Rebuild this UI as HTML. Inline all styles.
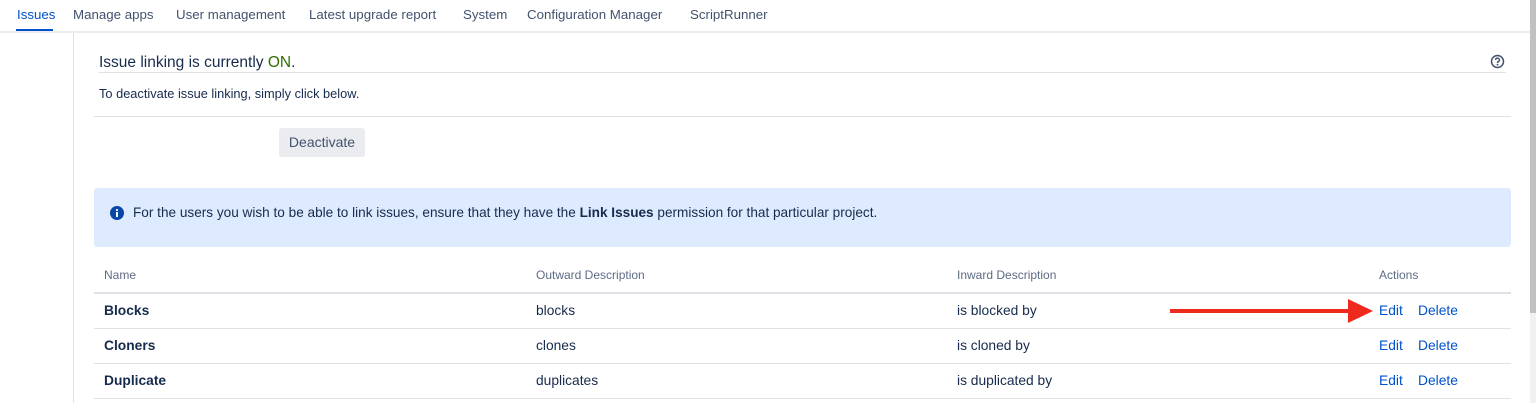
<!DOCTYPE html>
<html><head><meta charset="utf-8"><style>
*{margin:0;padding:0;box-sizing:border-box}
body{width:1536px;height:403px;overflow:hidden;background:#fff;font-family:"Liberation Sans",sans-serif;color:#172b4d;position:relative}
.a{position:absolute;white-space:nowrap}
.nav{font-size:13.3px;top:7px;color:#42526e}
.th{font-size:12px;color:#5e6c84;top:268px}
.td{font-size:13.8px;color:#172b4d}
.b{font-weight:bold}
.lnk{color:#0052cc}
.hl{position:absolute;height:1px;background:#dfe1e6}
</style></head><body>
<div class="a nav" style="left:17px;color:#0052cc">Issues</div>
<div style="position:absolute;left:16px;top:29px;width:37px;height:3px;background:#0052cc"></div>
<div class="a nav" style="left:73px">Manage apps</div>
<div class="a nav" style="left:176px">User management</div>
<div class="a nav" style="left:309px">Latest upgrade report</div>
<div class="a nav" style="left:463px">System</div>
<div class="a nav" style="left:527px">Configuration Manager</div>
<div class="a nav" style="left:690px">ScriptRunner</div>
<div style="position:absolute;left:0;top:31px;width:1530px;height:2px;background:#ebecf0"></div>
<div style="position:absolute;left:73px;top:33px;width:1px;height:370px;background:#dfe1e6"></div>
<div style="position:absolute;left:1530px;top:0;width:6px;height:403px;background:#f1f1f1"></div>
<div style="position:absolute;left:1530px;top:0;width:6px;height:313px;background:#c1c1c1"></div>

<div class="a" style="left:99px;top:54px;font-size:15.5px">Issue linking is currently <span style="color:#2f6f00">ON</span>.</div>
<svg class="a" style="left:1490px;top:54px" width="15" height="15" viewBox="0 0 15 15"><circle cx="7.5" cy="7.5" r="6" fill="none" stroke="#42526e" stroke-width="1.5"/><path d="M5.6 6a1.9 1.9 0 1 1 2.6 1.7c-.5.2-.7.5-.7 1v.4" fill="none" stroke="#42526e" stroke-width="1.4"/><circle cx="7.5" cy="10.8" r=".9" fill="#42526e"/></svg>
<div class="hl" style="left:99px;top:72px;width:1407px"></div>
<div class="a" style="left:99px;top:86px;font-size:12.8px">To deactivate issue linking, simply click below.</div>
<div class="hl" style="left:94px;top:116px;width:1417px"></div>
<div class="a" style="left:279px;top:128px;width:86px;height:29px;background:#ebecf0;border-radius:3px;font-size:14px;color:#42526e;text-align:center;line-height:29px">Deactivate</div>

<div style="position:absolute;left:94px;top:188px;width:1417px;height:59px;background:#deebff;border-radius:3px"></div>
<svg class="a" style="left:110px;top:206px" width="14" height="14" viewBox="0 0 14 14"><circle cx="7" cy="7" r="7" fill="#0747a6"/><rect x="6" y="6" width="2" height="5" fill="#fff"/><circle cx="7" cy="4" r="1.1" fill="#fff"/></svg>
<div class="a" style="left:133px;top:205px;font-size:13.6px">For the users you wish to be able to link issues, ensure that they have the <b>Link Issues</b> permission for that particular project.</div>

<div class="a th" style="left:104px">Name</div>
<div class="a th" style="left:536px">Outward Description</div>
<div class="a th" style="left:957px">Inward Description</div>
<div class="a th" style="left:1379px">Actions</div>
<div style="position:absolute;left:94px;top:292px;width:1417px;height:2px;background:#dfe1e6"></div>

<div class="a td b" style="left:104px;top:303px">Blocks</div>
<div class="a td" style="left:536px;top:303px">blocks</div>
<div class="a td" style="left:957px;top:303px">is blocked by</div>
<div class="a td lnk" style="left:1379px;top:303px">Edit</div>
<div class="a td lnk" style="left:1418px;top:303px">Delete</div>
<div class="hl" style="left:94px;top:328px;width:1417px"></div>
<div class="a td b" style="left:104px;top:338px">Cloners</div>
<div class="a td" style="left:536px;top:338px">clones</div>
<div class="a td" style="left:957px;top:338px">is cloned by</div>
<div class="a td lnk" style="left:1379px;top:338px">Edit</div>
<div class="a td lnk" style="left:1418px;top:338px">Delete</div>
<div class="hl" style="left:94px;top:363px;width:1417px"></div>
<div class="a td b" style="left:104px;top:373px">Duplicate</div>
<div class="a td" style="left:536px;top:373px">duplicates</div>
<div class="a td" style="left:957px;top:373px">is duplicated by</div>
<div class="a td lnk" style="left:1379px;top:373px">Edit</div>
<div class="a td lnk" style="left:1418px;top:373px">Delete</div>
<div class="hl" style="left:94px;top:398px;width:1417px"></div>

<svg class="a" style="left:1168px;top:298px" width="208" height="26" viewBox="0 0 208 26"><rect x="2" y="11" width="182" height="4" fill="#ee2a1e"/><polygon points="180,1 205,13 180,25" fill="#ee2a1e"/></svg>
</body></html>
